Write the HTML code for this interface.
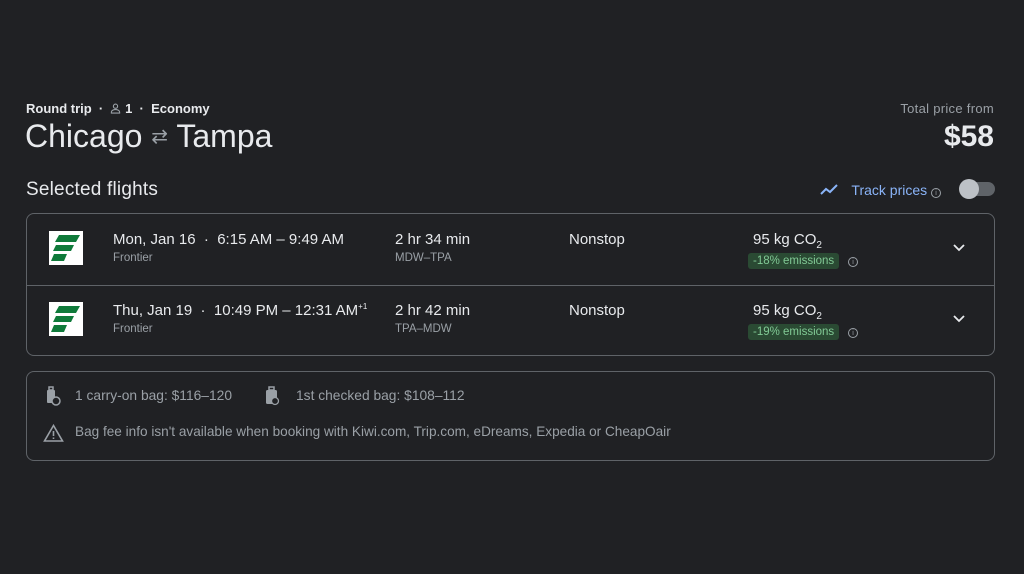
<!DOCTYPE html>
<html><head><meta charset="utf-8"><style>
*{margin:0;padding:0;box-sizing:border-box}
body{width:1024px;height:574px;background:#202124;color:#e8eaed;font-family:"Liberation Sans",sans-serif;position:relative;overflow:hidden}
.a{position:absolute;white-space:nowrap}
.card{position:absolute;left:26px;width:969px;border:1px solid #5f6368;border-radius:8px}
.sub{color:#9aa0a6;font-size:11.5px}
.t14{font-size:15px;color:#e8eaed}
.badge{background:#2a4a33;color:#81c995;font-size:11.5px;padding:2px 5px;border-radius:3px}
.info{display:inline-block;width:10px;height:10px;border:1px solid #9aa0a6;border-radius:50%;font-size:7px;text-align:center;line-height:9px;color:#9aa0a6}
</style></head><body>
<div class="a" style="left:26px;top:101px;font-size:13px;font-weight:bold;color:#e8eaed">Round trip &nbsp;· &nbsp;<svg width="11" height="11" viewBox="0 0 12 12" style="vertical-align:-1px"><circle cx="6" cy="3.5" r="2.3" fill="none" stroke="#9aa0a6" stroke-width="1.2"/><path d="M1.5 11v-1.2c0-1.6 2.2-2.6 4.5-2.6s4.5 1 4.5 2.6V11z" fill="none" stroke="#9aa0a6" stroke-width="1.2"/></svg> 1 &nbsp;· &nbsp;Economy</div>
<div class="a" style="left:25px;top:118px;font-size:32px">Chicago <span style="color:#9aa0a6;font-size:20px;vertical-align:4px">⇄</span> Tampa</div>
<div class="a" style="right:30px;top:101px;font-size:13px;letter-spacing:0.3px;color:#9aa0a6">Total price from</div>
<div class="a" style="right:30px;top:120px;font-size:30px;font-weight:bold">$58</div>
<div class="a" style="left:26px;top:179px;font-size:19px;letter-spacing:0.2px">Selected flights</div>
<div class="a" style="left:820px;top:182px;font-size:14px;color:#8ab4f8"><svg width="20" height="12" viewBox="0 0 20 12" style="vertical-align:-1px"><path d="M1 10l5-5 4 3 7-7" fill="none" stroke="#8ab4f8" stroke-width="2"/></svg>&nbsp;&nbsp; Track prices <span class="info">i</span></div>
<div class="a" style="left:961px;top:182px;width:34px;height:14px;border-radius:7px;background:#5f6368"></div>
<div class="a" style="left:959px;top:179px;width:20px;height:20px;border-radius:50%;background:#bdc1c6"></div>

<div class="card" style="top:213px;height:143px">
 <div style="position:absolute;left:0;right:0;top:71px;border-top:1px solid #5f6368"></div>
</div>
<svg class="a" style="left:49px;top:231px" width="34" height="34" viewBox="0 0 34 34"><rect width="34" height="34" fill="#fff"/><path d="M10 4h21l-4 7H6z M7 14h18l-3 6H4z M5 23h13l-3 7H2z" fill="#0f7a3a"/></svg>
<svg class="a" style="left:49px;top:302px" width="34" height="34" viewBox="0 0 34 34"><rect width="34" height="34" fill="#fff"/><path d="M10 4h21l-4 7H6z M7 14h18l-3 6H4z M5 23h13l-3 7H2z" fill="#0f7a3a"/></svg>
<div class="a t14" style="left:113px;top:231px">Mon, Jan 16 &nbsp;· &nbsp;6:15 AM – 9:49 AM</div>
<div class="a sub" style="left:113px;top:252px">Frontier</div>
<div class="a t14" style="left:395px;top:231px">2 hr 34 min</div>
<div class="a sub" style="left:395px;top:252px">MDW–TPA</div>
<div class="a t14" style="left:569px;top:231px">Nonstop</div>
<div class="a t14" style="left:753px;top:231px">95 kg CO<sub style="font-size:10px">2</sub></div>
<div class="a" style="left:748px;top:251px"><span class="badge">-18% emissions</span> &nbsp;<span class="info">i</span></div>
<svg class="a" style="left:952px;top:243px" width="14" height="10"><path d="M2 2l5 5 5-5" fill="none" stroke="#e8eaed" stroke-width="1.8"/></svg>

<div class="a t14" style="left:113px;top:302px">Thu, Jan 19 &nbsp;· &nbsp;10:49 PM – 12:31 AM<sup style="font-size:8px">+1</sup></div>
<div class="a sub" style="left:113px;top:323px">Frontier</div>
<div class="a t14" style="left:395px;top:302px">2 hr 42 min</div>
<div class="a sub" style="left:395px;top:323px">TPA–MDW</div>
<div class="a t14" style="left:569px;top:302px">Nonstop</div>
<div class="a t14" style="left:753px;top:302px">95 kg CO<sub style="font-size:10px">2</sub></div>
<div class="a" style="left:748px;top:322px"><span class="badge">-19% emissions</span> &nbsp;<span class="info">i</span></div>
<svg class="a" style="left:952px;top:314px" width="14" height="10"><path d="M2 2l5 5 5-5" fill="none" stroke="#e8eaed" stroke-width="1.8"/></svg>

<div class="card" style="top:371px;height:90px"></div>
<svg class="a" style="left:45px;top:386px" width="18" height="20" viewBox="0 0 18 20"><path d="M4 1h4v3H4z" fill="none" stroke="#9aa0a6" stroke-width="1.5"/><rect x="2" y="4" width="8" height="13" rx="1" fill="#9aa0a6"/><circle cx="11" cy="15" r="4" fill="#202124" stroke="#9aa0a6" stroke-width="1.5"/></svg>
<div class="a sub" style="left:75px;top:388px;font-size:13.8px">1 carry-on bag: $116–120</div>
<svg class="a" style="left:264px;top:386px" width="18" height="20" viewBox="0 0 18 20"><path d="M5 1h5v3H5z" fill="none" stroke="#9aa0a6" stroke-width="1.5"/><rect x="2" y="4" width="11" height="14" rx="1.5" fill="#9aa0a6"/><circle cx="11" cy="15" r="3.5" fill="#202124" stroke="#9aa0a6" stroke-width="1.3"/></svg>
<div class="a sub" style="left:296px;top:388px;font-size:13.8px">1st checked bag: $108–112</div>
<svg class="a" style="left:43px;top:424px" width="21" height="18" viewBox="0 0 21 18"><path d="M10.5 1.5L1.5 17h18z" fill="none" stroke="#9aa0a6" stroke-width="1.6"/><path d="M10.5 7v5M10.5 13.5v1.5" stroke="#9aa0a6" stroke-width="1.6"/></svg>
<div class="a sub" style="left:75px;top:424px;font-size:13.6px">Bag fee info isn't available when booking with Kiwi.com, Trip.com, eDreams, Expedia or CheapOair</div>
</body></html>
